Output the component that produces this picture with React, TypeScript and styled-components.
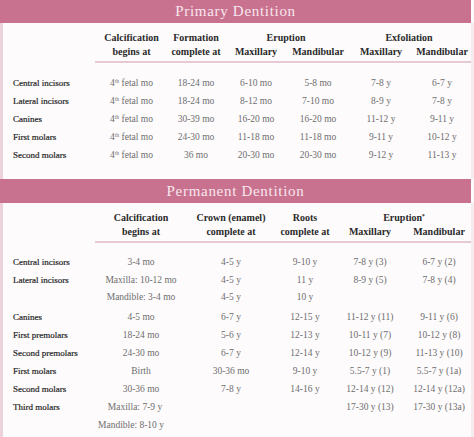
import React from "react";
import styled, { createGlobalStyle } from "styled-components";

const Global = createGlobalStyle`
  html, body { margin: 0; padding: 0; background: #fdfbfc; }
  body { width: 474px; height: 437px; overflow: hidden; font-family: "Liberation Serif", "Times New Roman", serif; }
`;

const Page = styled.div`
  width: 474px;
  display: flex;
  flex-direction: column;
`;

const Band = styled.div<{ $h: number }>`
  height: ${(p) => p.$h}px;
  background: #c8728f;
  display: flex;
  align-items: center;
  justify-content: center;
  color: #f8e6ee;
  font-size: 15px;
  letter-spacing: 0.7px;
  margin-right: 3px;
`;

const Body = styled.div<{ $pt: number; $pb: number }>`
  border-left: 3px solid #ecd2dd;
  border-right: 3px solid #f6ecf0;
  background: #fdfbfc;
  padding-top: 8px;
  display: flex;
  flex-direction: column;
  --rows-pt: ${(p) => p.$pt}px;
  --rows-pb: ${(p) => p.$pb}px;
`;

const HeadGrid = styled.div<{ $cols: string }>`
  margin-left: 92px;
  display: grid;
  grid-template-columns: ${(p) => p.$cols};
  grid-template-rows: 14px 14px;
  padding-bottom: 2px;
  border-bottom: 2px solid #e6c9d4;
`;

const HeadCell = styled.div<{ $col: number; $span?: number; $row: number; $rspan?: number }>`
  grid-column: ${(p) => p.$col} / span ${(p) => p.$span ?? 1};
  grid-row: ${(p) => p.$row} / span ${(p) => p.$rspan ?? 1};
  text-align: center;
  font-weight: bold;
  font-size: 10px;
  line-height: 14px;
  color: #2a2a2a;
  white-space: nowrap;
`;

const Rows = styled.div`
  padding-top: var(--rows-pt);
  padding-bottom: var(--rows-pb);
  display: flex;
  flex-direction: column;
`;

const Row = styled.div<{ $cols: string; $h?: number; $mt?: number }>`
  display: grid;
  grid-template-columns: ${(p) => p.$cols};
  height: ${(p) => p.$h ?? 18}px;
  margin-top: ${(p) => p.$mt ?? 0}px;
  align-items: center;
`;

const Label = styled.div`
  padding-left: 10px;
  font-size: 9px;
  color: #1f1f1f;
  white-space: nowrap;
  -webkit-text-stroke: 0.2px #1f1f1f;
`;

const Value = styled.div<{ $dx?: number }>`
  text-align: center;
  font-size: 9.5px;
  color: #6e6e6e;
  white-space: nowrap;
  transform: translateX(${(p) => p.$dx ?? 0}px);
`;

const Sup = styled.sup`
  font-size: 5.5px;
  vertical-align: 3px;
  line-height: 0;
`;

const P_COLS = "92px 73px 56px 64px 60px 66px 56px";
const P_HEAD = "73px 56px 64px 60px 66px 56px";
const M_COLS = "92px 92px 88px 60px 70px 68px";
const M_HEAD = "92px 88px 60px 70px 68px";

const fetal = (
  <>
    4<Sup>th</Sup> fetal mo
  </>
);

type Cell = React.ReactNode;

const primary: [string, Cell[]][] = [
  ["Central incisors", [fetal, "18-24 mo", "6-10 mo", "5-8 mo", "7-8 y", "6-7 y"]],
  ["Lateral incisors", [fetal, "18-24 mo", "8-12 mo", "7-10 mo", "8-9 y", "7-8 y"]],
  ["Canines", [fetal, "30-39 mo", "16-20 mo", "16-20 mo", "11-12 y", "9-11 y"]],
  ["First molars", [fetal, "24-30 mo", "11-18 mo", "11-18 mo", "9-11 y", "10-12 y"]],
  ["Second molars", [fetal, "36 mo", "20-30 mo", "20-30 mo", "9-12 y", "11-13 y"]],
];

const permanent: { label: string; cells: Cell[]; h?: number; mt?: number; dx?: number }[] = [
  { label: "Central incisors", cells: ["3-4 mo", "4-5 y", "9-10 y", "7-8 y (3)", "6-7 y (2)"] },
  { label: "Lateral incisors", cells: ["Maxilla: 10-12 mo", "4-5 y", "11 y", "8-9 y (5)", "7-8 y (4)"] },
  { label: "", cells: ["Mandible: 3-4 mo", "4-5 y", "10 y", "", ""], h: 16 },
  { label: "Canines", cells: ["4-5 mo", "6-7 y", "12-15 y", "11-12 y (11)", "9-11 y (6)"], mt: 3 },
  { label: "First premolars", cells: ["18-24 mo", "5-6 y", "12-13 y", "10-11 y (7)", "10-12 y (8)"] },
  { label: "Second premolars", cells: ["24-30 mo", "6-7 y", "12-14 y", "10-12 y (9)", "11-13 y (10)"] },
  { label: "First molars", cells: ["Birth", "30-36 mo", "9-10 y", "5.5-7 y (1)", "5.5-7 y (1a)"] },
  { label: "Second molars", cells: ["30-36 mo", "7-8 y", "14-16 y", "12-14 y (12)", "12-14 y (12a)"] },
  { label: "Third molars", cells: ["Maxilla: 7-9 y", "", "", "17-30 y (13)", "17-30 y (13a)"], dx: -6 },
  { label: "", cells: ["Mandible: 8-10 y", "", "", "", ""], dx: -10 },
];

export default function App() {
  return (
    <Page>
      <Global />
      <Band $h={23}>Primary Dentition</Band>
      <Body $pt={11} $pb={15}>
        <HeadGrid $cols={P_HEAD}>
          <HeadCell $col={1} $row={1} $rspan={2}>
            Calcification
            <br />
            begins at
          </HeadCell>
          <HeadCell $col={2} $row={1} $rspan={2}>
            Formation
            <br />
            complete at
          </HeadCell>
          <HeadCell $col={3} $span={2} $row={1}>
            Eruption
          </HeadCell>
          <HeadCell $col={3} $row={2}>
            Maxillary
          </HeadCell>
          <HeadCell $col={4} $row={2}>
            Mandibular
          </HeadCell>
          <HeadCell $col={5} $span={2} $row={1}>
            Exfoliation
          </HeadCell>
          <HeadCell $col={5} $row={2}>
            Maxillary
          </HeadCell>
          <HeadCell $col={6} $row={2}>
            Mandibular
          </HeadCell>
        </HeadGrid>
        <Rows>
          {primary.map(([label, cells]) => (
            <Row key={label} $cols={P_COLS}>
              <Label>{label}</Label>
              {cells.map((c, i) => (
                <Value key={i}>{c}</Value>
              ))}
            </Row>
          ))}
        </Rows>
      </Body>
      <Band $h={24}>Permanent Dentition</Band>
      <Body $pt={10} $pb={3}>
        <HeadGrid $cols={M_HEAD}>
          <HeadCell $col={1} $row={1} $rspan={2}>
            Calcification
            <br />
            begins at
          </HeadCell>
          <HeadCell $col={2} $row={1} $rspan={2}>
            Crown (enamel)
            <br />
            complete at
          </HeadCell>
          <HeadCell $col={3} $row={1} $rspan={2}>
            Roots
            <br />
            complete at
          </HeadCell>
          <HeadCell $col={4} $span={2} $row={1}>
            Eruption<Sup>*</Sup>
          </HeadCell>
          <HeadCell $col={4} $row={2}>
            Maxillary
          </HeadCell>
          <HeadCell $col={5} $row={2}>
            Mandibular
          </HeadCell>
        </HeadGrid>
        <Rows>
          {permanent.map((r, idx) => (
            <Row key={idx} $cols={M_COLS} $h={r.h} $mt={r.mt}>
              <Label>{r.label}</Label>
              {r.cells.map((c, i) => (
                <Value key={i} $dx={i === 0 ? r.dx : 0}>
                  {c}
                </Value>
              ))}
            </Row>
          ))}
        </Rows>
      </Body>
    </Page>
  );
}
